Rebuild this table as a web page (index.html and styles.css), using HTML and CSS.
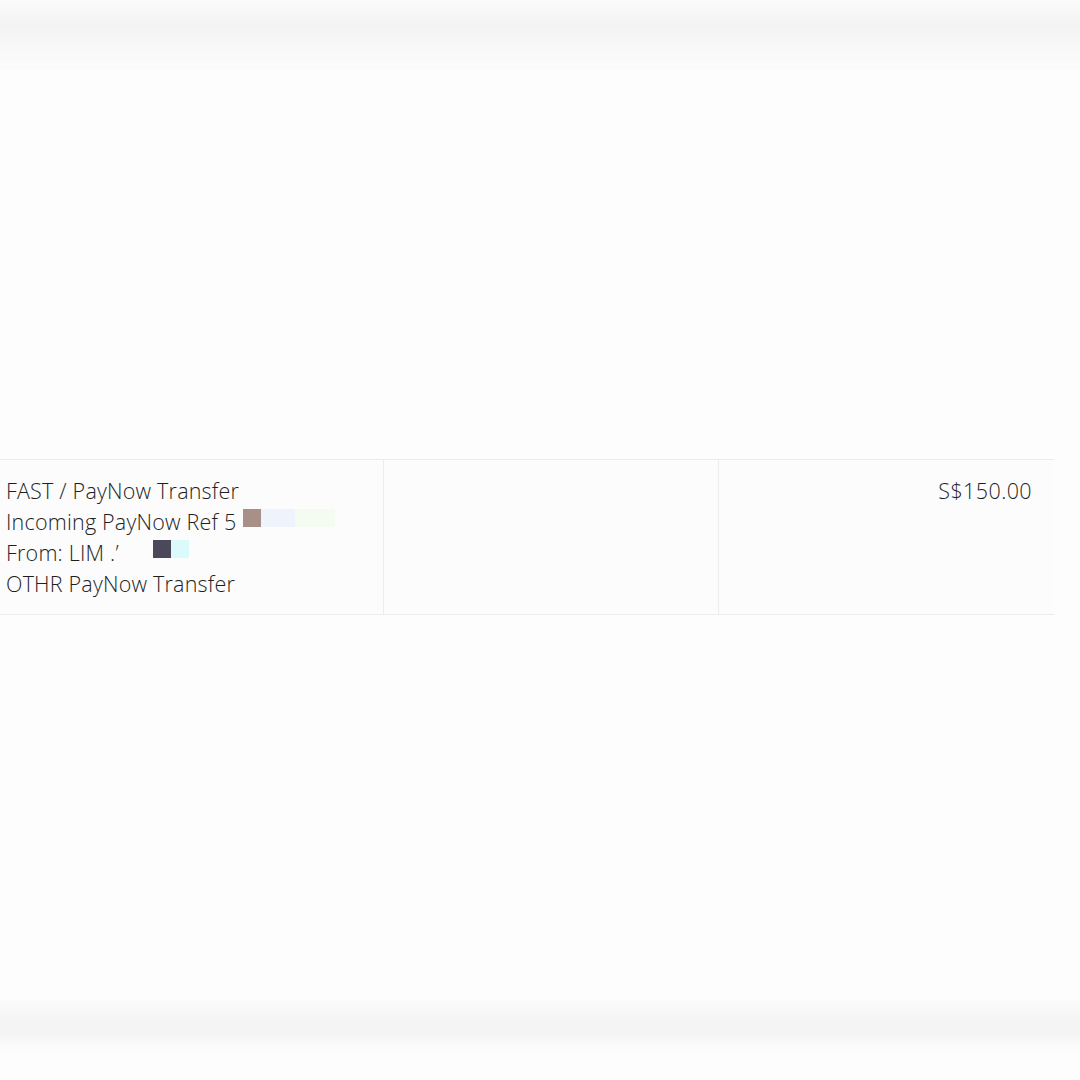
FILE: index.html
```html
<!DOCTYPE html>
<html lang="en">
<head>
  <meta charset="UTF-8">
  <title>Transaction</title>
  <link rel="stylesheet" href="styles.css">
</head>
<body>
  <div class="page">
    <!-- blurred header strip -->
    <div class="blur-band top"></div>

    <div class="txn-table">
      <div class="cell desc">
        <div>FAST / PayNow Transfer</div>
        <div>Incoming PayNow Ref 5<span class="px brown"></span><span class="px ice"></span><span class="px mint"></span></div>
        <div>From: LIM .’<span class="gap"></span><span class="px slate"></span><span class="px cyan"></span></div>
        <div>OTHR PayNow Transfer</div>
      </div>
      <div class="cell"></div>
      <div class="cell amount">S$150.00</div>
    </div>

    <!-- blurred footer strip -->
    <div class="blur-band bottom"></div>
  </div>
</body>
</html>
```

FILE: styles.css
```css
/* General Styles */
body {
  margin: 0;
  background-color: #fdfdfd;
  font-family: 'Open Sans', 'Noto Sans', sans-serif;
  color: #1f1f1f;
  overflow: hidden;
}
.page {
  display: flex;
  flex-direction: column;
  height: 1080px;
}
.blur-band {
  height: 70px;
  flex-shrink: 0;
}
.blur-band.top {
  background: linear-gradient(to bottom, #fbfbfb 0%, #f3f3f3 35%, #f7f7f7 60%, #fbfbfb 100%);
}
.blur-band.bottom {
  margin-top: auto;
  margin-bottom: 30px;
  height: 50px;
  background: linear-gradient(to bottom, #fbfbfb 0%, #f4f4f4 40%, #f4f4f4 65%, #fcfcfc 100%);
}
/* Transaction row */
.txn-table {
  margin-top: 389px;
  width: 1054px;
  display: grid;
  grid-template-columns: 383px 335px 1fr;
  border-top: 1px solid #ececec;
  border-bottom: 1px solid #ececec;
  background-color: #fcfcfc;
  height: 154px;
}
.cell {
  border-left: 1px solid #ececec;
}
.cell.desc {
  border-left: none;
  padding: 15px 0 0 6px;
  font-size: 21.5px;
  font-weight: 300;
  line-height: 31px;
  letter-spacing: 0.2px;
}
.amount {
  padding: 15px 22px 0 0;
  text-align: right;
  font-size: 21.5px;
  font-weight: 300;
  line-height: 31px;
  letter-spacing: 0.4px;
}
/* redacted pixels */
.px {
  display: inline-block;
  width: 18px;
  height: 18px;
  vertical-align: 3px;
}
.px.brown { background-color: #a88f87; margin-left: 7px; }
.px.ice { background-color: #eef3fc; width: 34px; }
.px.mint { background-color: #f4fcf2; width: 40px; }
.px.slate { background-color: #4b4859; }
.px.cyan { background-color: #dafafb; }
.gap {
  display: inline-block;
  width: 34px;
}
```
